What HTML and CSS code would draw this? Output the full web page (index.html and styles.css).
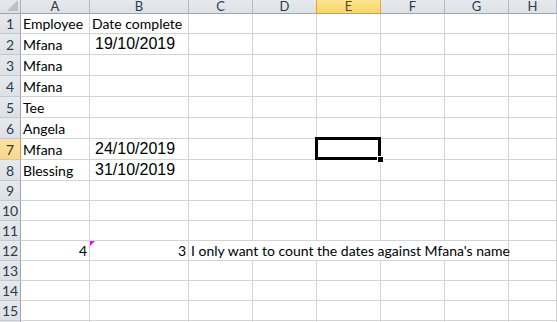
FILE: index.html
```html
<!DOCTYPE html>
<html lang="en">
<head>
    <meta charset="UTF-8">
    <title>Book1 - Sheet1</title>
    <link rel="stylesheet" href="styles.css">
</head>
<body>
    <div class="sheet">
        <!-- column headers -->
        <div class="corner"><span class="corner-mark"></span></div>
        <div class="col-head">A</div>
        <div class="col-head">B</div>
        <div class="col-head">C</div>
        <div class="col-head">D</div>
        <div class="col-head active">E</div>
        <div class="col-head">F</div>
        <div class="col-head">G</div>
        <div class="col-head">H</div>

        <!-- 1 -->
        <div class="row-head">1</div>
        <div class="cell">Employee</div>
        <div class="cell">Date complete</div>
        <div class="cell"></div><div class="cell"></div><div class="cell"></div><div class="cell"></div><div class="cell"></div><div class="cell"></div>

        <!-- 2 -->
        <div class="row-head">2</div>
        <div class="cell">Mfana</div>
        <div class="cell date">19/10/2019</div>
        <div class="cell"></div><div class="cell"></div><div class="cell"></div><div class="cell"></div><div class="cell"></div><div class="cell"></div>

        <!-- 3 -->
        <div class="row-head">3</div>
        <div class="cell">Mfana</div>
        <div class="cell"></div>
        <div class="cell"></div><div class="cell"></div><div class="cell"></div><div class="cell"></div><div class="cell"></div><div class="cell"></div>

        <!-- 4 -->
        <div class="row-head">4</div>
        <div class="cell">Mfana</div>
        <div class="cell"></div>
        <div class="cell"></div><div class="cell"></div><div class="cell"></div><div class="cell"></div><div class="cell"></div><div class="cell"></div>

        <!-- 5 -->
        <div class="row-head">5</div>
        <div class="cell">Tee</div>
        <div class="cell"></div>
        <div class="cell"></div><div class="cell"></div><div class="cell"></div><div class="cell"></div><div class="cell"></div><div class="cell"></div>

        <!-- 6 -->
        <div class="row-head">6</div>
        <div class="cell">Angela</div>
        <div class="cell"></div>
        <div class="cell"></div><div class="cell"></div><div class="cell"></div><div class="cell"></div><div class="cell"></div><div class="cell"></div>

        <!-- 7 -->
        <div class="row-head active">7</div>
        <div class="cell">Mfana</div>
        <div class="cell date">24/10/2019</div>
        <div class="cell"></div><div class="cell"></div>
        <div class="cell selected"><span class="fill-handle"></span></div>
        <div class="cell"></div><div class="cell"></div><div class="cell"></div>

        <!-- 8 -->
        <div class="row-head">8</div>
        <div class="cell">Blessing</div>
        <div class="cell date">31/10/2019</div>
        <div class="cell"></div><div class="cell"></div><div class="cell"></div><div class="cell"></div><div class="cell"></div><div class="cell"></div>

        <!-- 9 -->
        <div class="row-head">9</div>
        <div class="cell"></div><div class="cell"></div><div class="cell"></div><div class="cell"></div><div class="cell"></div><div class="cell"></div><div class="cell"></div><div class="cell"></div>

        <!-- 10 -->
        <div class="row-head">10</div>
        <div class="cell"></div><div class="cell"></div><div class="cell"></div><div class="cell"></div><div class="cell"></div><div class="cell"></div><div class="cell"></div><div class="cell"></div>

        <!-- 11 -->
        <div class="row-head">11</div>
        <div class="cell"></div><div class="cell"></div><div class="cell"></div><div class="cell"></div><div class="cell"></div><div class="cell"></div><div class="cell"></div><div class="cell"></div>

        <!-- 12 -->
        <div class="row-head">12</div>
        <div class="cell num">4</div>
        <div class="cell num"><span class="comment-mark"></span>3</div>
        <div class="cell overflow">I only want to count the dates against Mfana's name</div>
        <div class="cell"></div>

        <!-- 13 -->
        <div class="row-head">13</div>
        <div class="cell"></div><div class="cell"></div><div class="cell"></div><div class="cell"></div><div class="cell"></div><div class="cell"></div><div class="cell"></div><div class="cell"></div>

        <!-- 14 -->
        <div class="row-head">14</div>
        <div class="cell"></div><div class="cell"></div><div class="cell"></div><div class="cell"></div><div class="cell"></div><div class="cell"></div><div class="cell"></div><div class="cell"></div>

        <!-- 15 -->
        <div class="row-head">15</div>
        <div class="cell"></div><div class="cell"></div><div class="cell"></div><div class="cell"></div><div class="cell"></div><div class="cell"></div><div class="cell"></div><div class="cell"></div>

        <!-- 16 -->
        <div class="row-head">16</div>
        <div class="cell"></div><div class="cell"></div><div class="cell"></div><div class="cell"></div><div class="cell"></div><div class="cell"></div><div class="cell"></div><div class="cell"></div>
    </div>
</body>
</html>
```

FILE: styles.css
```css
body {
    margin: 0;
    background: #fff;
    overflow: hidden;
    font-family: Lato, 'Open Sans', sans-serif;
    font-size: 14px;
    color: #000;
}

.sheet {
    display: grid;
    grid-template-columns: 21px 69px 99px 64px 64px 64px 64px 64px 1fr;
    grid-template-rows: 14px 20px 21px 21px 21px 21px 21px 21px 21px 20px 20px 20px 20px 20px 20px 20px 20px;
    width: 557px;
    height: 322px;
    overflow: hidden;
}

.sheet > div {
    box-sizing: border-box;
    border-right: 1px solid #d4d4d4;
    border-bottom: 1px solid #d4d4d4;
    min-width: 0;
}

/* headers */
.corner,
.col-head,
.row-head {
    background: linear-gradient(#e6e9ed, #dde1e6);
    color: #2c3a4e;
}

.sheet > .corner {
    border-right: 1px solid #a9b0b9;
    border-bottom: 1px solid #9ea5ae;
    display: flex;
    justify-content: flex-end;
    align-items: flex-end;
    padding: 0 2px 2px 0;
}

.corner-mark {
    width: 0;
    height: 0;
    border-left: 11px solid transparent;
    border-bottom: 11px solid #bcc1c8;
}

.sheet > .col-head {
    border-right: 1px solid #b4bac3;
    border-bottom: 1px solid #9ea5ae;
    display: flex;
    justify-content: center;
    align-items: center;
    line-height: 13px;
    font-size: 13px;
}

.sheet > .row-head {
    border-right: 1px solid #9ea5ae;
    border-bottom: 1px solid #c3c8cf;
    display: flex;
    justify-content: center;
    align-items: flex-end;
    line-height: 15px;
    padding-bottom: 2px;
}

.sheet > .col-head.active {
    background: linear-gradient(#fde591, #f8d567);
    border-left: 1px solid #f0a23a;
    border-right: 1px solid #f0a23a;
    border-bottom: 1px solid #e59636;
    margin-left: -1px;
    color: #5a4520;
}

.sheet > .row-head.active {
    background: linear-gradient(#fbe3a4, #f8d78c);
    border-right: 1px solid #e99a38;
    color: #3d3420;
}

/* cells */
.cell {
    display: flex;
    align-items: flex-end;
    padding: 0 2px 2px 2px;
    line-height: 15px;
    white-space: nowrap;
    position: relative;
}

.cell.date {
    font-family: 'Liberation Sans', Arial, sans-serif;
    font-size: 16px;
    line-height: 16px;
    padding-left: 5px;
    padding-bottom: 2px;
}

.cell.num {
    justify-content: flex-end;
}

.sheet > .cell.overflow {
    grid-column: span 5;
    overflow: visible;
}

.comment-mark {
    position: absolute;
    top: 0;
    left: 0;
    width: 0;
    height: 0;
    border-top: 5px solid #ff00ff;
    border-right: 5px solid transparent;
}

/* active cell E7 */
.selected::after {
    content: "";
    position: absolute;
    left: -2px;
    top: -2px;
    width: 66px;
    height: 23px;
    box-sizing: border-box;
    border: 3px solid #000;
}

.fill-handle {
    position: absolute;
    right: -4px;
    bottom: -4px;
    width: 5px;
    height: 5px;
    background: #000;
    border: 1px solid #fff;
    z-index: 2;
}
```
